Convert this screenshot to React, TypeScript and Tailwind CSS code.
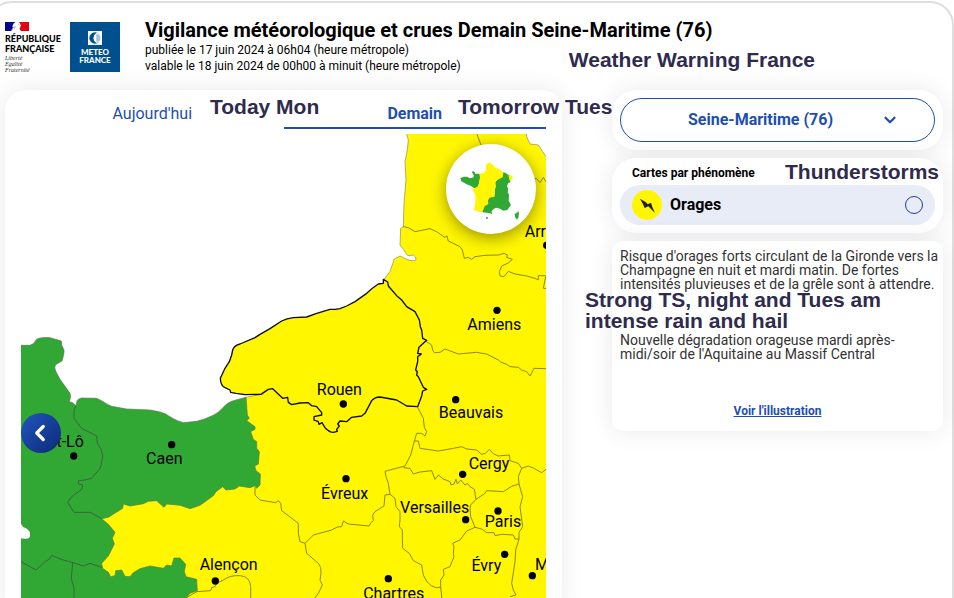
import { useState } from 'react'
import { ChevronDown, ChevronLeft } from 'lucide-react'

const GREEN = '#32a834'
const YELLOW = '#fff600'

// x/y: label anchor point, dot: prefecture position
const cities = [
  { name: 'Arras', x: 1631, y: 710, dot: [1640, 736] },
  { name: 'Amiens', x: 1483, y: 989, dot: [1491, 931] },
  { name: 'Rouen', x: 1018, y: 1185, dot: [1030, 1212] },
  { name: 'Beauvais', x: 1413, y: 1254, dot: [1367, 1199] },
  { name: 'Saint-Lô', x: 164, y: 1341, dot: [221, 1368] },
  { name: 'Caen', x: 493, y: 1391, dot: [515, 1334] },
  { name: 'Cergy', x: 1467, y: 1407, dot: [1388, 1423] },
  { name: 'Évreux', x: 1034, y: 1497, dot: [1038, 1436] },
  { name: 'Versailles', x: 1304, y: 1539, dot: [1397, 1559] },
  { name: 'Paris', x: 1509, y: 1580, dot: [1494, 1533] },
  { name: 'Alençon', x: 686, y: 1710, dot: [646, 1743] },
  { name: 'Évry', x: 1459, y: 1712, dot: [1514, 1663] },
  { name: 'Melun', x: 1671, y: 1710, dot: [1597, 1727] },
  { name: 'Chartres', x: 1181, y: 1797, dot: [1165, 1736] },
]

function DepartmentMap() {
  return (
    <svg viewBox="63 402 1575 1452" className="block w-full" role="img" aria-label="Carte de vigilance">
      <path fill={YELLOW} stroke="#8a8850" strokeWidth="2" d="M1220 390 1220 402 1225 420 1222 450 1215 485 1218 540 1212 610 1210 680 1202 685 1200 735 1212 750Q1220 768 1228 767L1240 765Q1249 770 1248 779Q1242 786 1220 778L1200 768 1183 777 1170 815 1152 838 1150 850 783 1183 738 1192 300 1500 300 1900 1700 1900 1700 520 1638 470 1628 455 1615 435 1590 432 1580 410 1578 390Z" />
      <path fill={GREEN} stroke="#567a50" strokeWidth="2" d="M738 1192 700 1202Q680 1208 670 1222Q655 1240 635 1248 610 1260 590 1264L550 1268Q530 1262 520 1256L495 1241 480 1236Q450 1228 430 1229L380 1227 335 1219Q320 1213 310 1205L290 1195 245 1194Q230 1197 230 1208L228 1217 218 1208 208 1205 212 1190 210 1180 180 1138 168 1115Q160 1098 170 1092L186 1083Q193 1060 192 1050L185 1035 184 1023 174 1020 150 1013Q120 1011 110 1018L100 1031 90 1036 50 1036 50 1573 63 1573 70 1582Q87 1588 90 1599L90 1610Q85 1617 75 1616L63 1613 50 1613 50 1900 520 1900 558 1794 570 1780 592 1772 590 1738 558 1730 553 1715 557 1693 540 1674 522 1674 515 1698 500 1695 490 1705 450 1698 420 1706 400 1718 390 1730 375 1729 365 1710 347 1712 345 1727 332 1730 325 1717 308 1705 305 1690 325 1668 343 1632 337 1615 345 1597 325 1573 305 1556 325 1552 368 1525 370 1512 390 1518 430 1511 445 1504 470 1502 492 1522 500 1512 540 1516 570 1526 600 1516 640 1487 648 1475 668 1460 678 1470 705 1467 718 1458 750 1463 765 1457 770 1465 780 1455 781 1422 768 1412 764 1398 775 1392 778 1355 770 1345 770 1325 760 1318 752 1295 765 1288 765 1280 740 1262 748 1255 742 1245Z" />
      <path fill="#fff" d="M50 1573 63 1573 70 1582Q87 1588 90 1599L90 1610Q85 1617 75 1616L50 1613Z" />
      <g fill="none" stroke="#3a6440" strokeWidth="3" strokeLinejoin="round">
        <path d="M228 1217 222 1230 222 1255 245 1285 290 1308 292 1330Q310 1355 307 1375T300 1405L275 1435 255 1440 236 1442 235 1452 248 1455 245 1468 215 1490 203 1507 222 1537 270 1537 305 1556" />
        <path d="M50 1680 63 1685 108 1710 135 1685 147 1678 155 1666 190 1680 220 1688 250 1698 270 1690 305 1702M218 1688 214 1735 222 1765 222 1860" />
      </g>
      <g fill="none" stroke="#8d8900" strokeWidth="3" strokeLinejoin="round">
        <g transform="translate(1140 390)">
          <path d="M70 290 85 293 105 305 150 296 170 305 195 323 200 317 205 333 240 350 247 360 253 385 265 382 275 388 285 380 315 376 355 375 372 370 382 375 380 382 397 388 385 399 365 408 358 425 360 438 372 440 385 424 405 432 440 438 465 445 475 450 475 437 498 437M497 440 490 475 510 476" />
          <path d="M288 5 303 45M460 146 470 146 480 158 490 142 498 155" />
        </g>
        <g transform="translate(1110 1020)">
          <path d="M167 3 185 15 188 30 193 38 210 37 225 27 265 42 320 37 350 42 385 60 392 66 410 73 420 80 445 82 455 90 470 95 480 108 492 85 528 86" />
          <path d="M143 202 160 235 163 262 170 275 165 288 155 280 140 280 133 303 122 345 105 378 45 394 48 410 55 430 60 463" />
          <path d="M133 303 145 303 150 325 205 333 250 325 275 320 290 327 320 330 335 343 346 340 358 328 370 341 385 348 418 345 420 362 445 370 455 385 475 378 490 384 515 398 528 388" />
          <path d="M100 383 120 385 130 402 150 396 185 392 195 418 205 405 220 417 240 425 243 435 252 432 258 418 262 432 272 420 285 435 292 430 300 440 313 448 318 478" />
          <path d="M455 385 445 410 447 432 425 439 400 455 350 452 345 460 318 478 302 495 300 505 302 530 315 562 335 567 350 578 372 578 375 587 395 583 430 585 435 597 447 597 447 577 458 560 450 500 458 470 447 432" />
          <path d="M315 562 290 573 270 600 248 610 252 620 250 640 252 650 240 680 220 688 222 705 212 720 212 740 218 800M447 597 437 630 435 665 425 730 430 750 438 765 420 770" />
          <path d="M60 463 75 475 78 500 90 515 90 540 88 560 97 570 97 595 98 625 118 640 130 662 155 675 160 705Q170 730 185 738T212 742" />
        </g>
        <g transform="translate(570 1320)">
          <path d="M600 163 585 165 582 198 555 215 548 225 550 242 543 248 537 258 475 252 460 243 455 260 442 261 425 270 370 285 345 310 330 305 325 280 325 250 275 212 272 190 265 182 257 188 210 180 195 165 195 140" />
          <path d="M345 310 350 340 385 370Q395 380 393 400L390 420 397 435 385 460 370 480M-12 474 20 455 62 452 65 443 75 440 80 430 100 420Q120 405 150 407T182 440L182 500" />
        </g>
      </g>
      {/* selected department */}
      <path fill={YELLOW} stroke="#0c0c00" strokeWidth="4" strokeLinejoin="round" transform="translate(600 780)" d="M550 58 550 70 535 72Q515 85 500 100L465 125 440 138 420 146 405 148 390 148 350 160 320 171 280 173Q260 175 245 183L210 206 180 223 165 233 120 252Q103 256 98 270L95 285 88 305 75 325 61 355Q62 378 75 383L90 390 92 397 108 400 135 404 183 403 205 388 218 386 248 415 263 412 265 427 275 434 300 429 325 428 335 437 350 440 365 458 365 465 342 470 342 480 355 485 357 493 366 488 375 503Q390 518 400 517L412 514 410 508 418 498 413 492 420 483 440 485 455 472 485 468 495 460 515 422Q525 411 540 411L590 420 620 438 653 440 665 408 668 393 680 388 670 382 655 350 650 345 652 335 647 330 653 305 653 290 664 282 653 280 657 262 680 241 668 235 665 210 661 200 658 180 645 155 620 140 605 120 590 107 565 78 563 66Z" />
      {cities.map(c => (
        <g key={c.name} fill="#000">
          <circle cx={c.dot[0]} cy={c.dot[1]} r="11" />
          <text x={c.x} y={c.y} textAnchor="middle" fontSize="48" className="font-[Roboto,sans-serif]">{c.name}</text>
        </g>
      ))}
    </svg>
  )
}

function FranceThumb() {
  return (
    <svg viewBox="18 12 270 270" className="block size-full" aria-hidden="true">
      <path fill={GREEN} d="M61 114 72 110 82 110 88 114 98 113 102 108 96 97 98 93 104 96 105 101 117 101 123 105 118 128 112 143 103 145 93 138 80 133 64 124Z" />
      <path fill={GREEN} d="M187 97 196 98 202 103 210 106 209 120 212 126 204 130 201 139 205 148 203 157 207 164 206 182 213 195 202 210 190 212 180 206 168 203 160 208 155 214 156 222 146 219 127 217 125 210 142 170 164 165 164 128 176 116Z" />
      <path fill={YELLOW} d="M118 102 132 99 138 90 138 74 148 67 160 76 163 82 178 88 190 98 188 112 176 118 166 122 168 140 164 150 164 170 148 173 144 182 145 192 134 199 127 216 115 215 102 210 106 188 106 164 96 148 106 143 116 138 117 125 120 112Z" />
      <path fill={YELLOW} d="M205 105 219 107 213 122 209 121Z" />
      <path fill={GREEN} d="M234 211 237 220 235 233 231 239 225 230 224 222 233 217Z" />
      <circle cx="141" cy="234" r="3" fill={GREEN} />
    </svg>
  )
}

function RepubliqueLogo() {
  return (
    <div className="w-[57px] shrink-0 text-black">
      <svg viewBox="0 0 72 27" className="block h-[9px] w-6" aria-hidden="true">
        <path fill="#000091" d="M0 0h30v27H0z" />
        <path fill="#e1000f" d="M42 0h30v27H42z" />
        <path fill="#fff" d="M30 0h10q7 2 6 7l3 5-3 1q1 6-3 7l5 7H17l8-5-6 1 7-7-4 0q2-13 10-16z" />
        <path stroke="#555" strokeWidth="1" fill="none" d="M24 16l8-2-4 7M38 8l5 1" />
      </svg>
      <p className="mt-[3px] font-[Lato,sans-serif] text-[9px] leading-[10px] font-black">RÉPUBLIQUE<br />FRANÇAISE</p>
      <p className="mt-[1px] font-['Liberation_Serif',serif] text-[6px] leading-[6px] text-[#333] italic">Liberté<br />Égalité<br />Fraternité</p>
    </div>
  )
}

function MeteoFranceLogo() {
  return (
    <div className="flex size-[50px] shrink-0 flex-col items-center bg-[#00508f] pt-[9px] text-white">
      <svg viewBox="0 0 42 42" className="size-[14px]" aria-hidden="true">
        <path fill="#fff" d="M0 0h42v42H0z" />
        <circle cx="21" cy="21" r="17" fill="#00508f" />
        <path fill="#fff" d="M25 6a15 15 0 0 1 0 30q-9-6-9-15t9-15z" />
        <path fill="#00508f" d="M25 9a12 12 0 0 1 0 24z" opacity=".35" />
      </svg>
      <p className="mt-[3px] text-center font-[Lato,sans-serif] text-[8px] leading-[8px] font-black">METEO<br />FRANCE</p>
    </div>
  )
}

const note = "pointer-events-none absolute z-10 font-['Liberation_Sans',sans-serif] text-[21px] leading-[21px] font-bold whitespace-nowrap text-[#2e2b4d]"
const card = 'bg-white shadow-[0_0_24px_rgba(0,0,0,0.09)]'

export default function App() {
  const [tab, setTab] = useState<'today' | 'tomorrow'>('tomorrow')
  const [storms, setStorms] = useState(false)
  const tabs = [
    { id: 'today' as const, label: "Aujourd'hui" },
    { id: 'tomorrow' as const, label: 'Demain' },
  ]
  return (
    <div className="h-dvh overflow-hidden bg-white pt-[1px] font-[Roboto,sans-serif] text-black">
      <div className="-ml-3 min-h-full rounded-t-3xl border-2 border-[#dedede] pr-[9px] pl-[15px]">
        <header className="relative flex h-[87px] items-start pt-[19px]">
          <RepubliqueLogo />
          <div className="ml-2"><MeteoFranceLogo /></div>
          <div className="-mt-1 ml-[25px]">
            <h1 className="text-xl leading-6 font-bold">Vigilance météorologique et crues Demain Seine-Maritime (76)</h1>
            <p className="text-xs leading-4">publiée le 17 juin 2024 à 06h04 (heure métropole)</p>
            <p className="text-xs leading-4">valable le 18 juin 2024 de 00h00 à minuit (heure métropole)</p>
          </div>
          <p className={`${note} right-32 bottom-5`}>Weather Warning France</p>
        </header>

        <div className="flex items-start gap-[50px]">
          <main className={`${card} min-w-0 flex-1 rounded-[20px] px-4`}>
            <div className="relative flex">
              {tabs.map(t => (
                <button key={t.id} onClick={() => setTab(t.id)}
                  className={tab === t.id ? 'h-[39px] flex-1 border-b-2 border-[#1d4fb0] pt-[10px] font-bold text-[#1d4fb0]' : 'h-[39px] flex-1 border-b-2 border-transparent pt-[10px] text-[#1d4fb0]'}>
                  {t.label}
                </button>
              ))}
              <p className={`${note} top-[6px] left-[189px]`}>Today Mon</p>
              <p className={`${note} top-[6px] left-[437px]`}>Tomorrow Tues</p>
            </div>
            <div className="relative mt-[5px] overflow-hidden">
              <DepartmentMap />
              <button aria-label="Carte de France" className="absolute top-[10px] right-[10px] size-[90px] rounded-full bg-white shadow-[0_4px_16px_rgba(0,0,0,0.4)]">
                <FranceThumb />
              </button>
              <button aria-label="Carte précédente" className="absolute top-[279px] left-0 flex size-10 items-center justify-center rounded-full bg-linear-to-br from-[#2256be] to-[#0c2a78] pr-[2px] text-white">
                <ChevronLeft size={26} strokeWidth={3} />
              </button>
            </div>
          </main>

          <aside className="w-[331px] shrink-0 space-y-2">
            <div className={`${card} rounded-3xl p-2`}>
              <div className="relative">
                <select aria-label="Département" className="h-11 w-full appearance-none rounded-full border border-[#1d4fb0] bg-white pr-[34px] font-bold text-[#1d4fb0] [text-align-last:center]">
                  <option>Seine-Maritime (76)</option>
                </select>
                <ChevronDown size={18} strokeWidth={3} className="pointer-events-none absolute top-[13px] right-9 text-[#1d4fb0]" />
              </div>
            </div>

            <div className={`${card} relative rounded-3xl p-2`}>
              <h2 className="pl-3 text-xs leading-[14px] font-bold">Cartes par phénomène</h2>
              <p className={`${note} top-[3px] right-1`}>Thunderstorms</p>
              <label className="mt-[5px] flex h-10 items-center rounded-full bg-[#e8ecf7] px-3">
                <svg viewBox="0 0 90 90" className="size-[30px]" aria-hidden="true">
                  <circle cx="45" cy="45" r="45" fill={YELLOW} />
                  <path fill="#222" d="M24 26 42 37 47 43 57 38 61 51 69 69 54 54 49 49 38 54 33 43Z" />
                </svg>
                <span className="ml-2 flex-1 font-bold">Orages</span>
                <input type="radio" name="phenomenon" checked={storms} onChange={() => setStorms(true)}
                  className="size-[18px] appearance-none rounded-full border border-[#1d3f94] checked:bg-[#1d4fb0]" />
              </label>
            </div>

            <div className={`${card} relative rounded-[10px] pt-2 pb-3 pl-2 text-sm leading-[14px] text-[#333]`}>
              <p>Risque d'orages forts circulant de la Gironde vers la Champagne en nuit et mardi matin. De fortes intensités pluvieuses et de la grêle sont à attendre.</p>
              <p className="mt-[42px]">Nouvelle dégradation orageuse mardi après-midi/soir de l'Aquitaine au Massif Central</p>
              <p className={`${note} top-12 -left-[27px]`}>Strong TS, night and Tues am<br />intense rain and hail</p>
              <div className="mt-[42px] pr-2 text-center">
                <a href="#illustration" className="text-xs leading-4 font-bold text-[#1d4fb0] underline">Voir l'illustration</a>
              </div>
            </div>
          </aside>
        </div>
      </div>
    </div>
  )
}
